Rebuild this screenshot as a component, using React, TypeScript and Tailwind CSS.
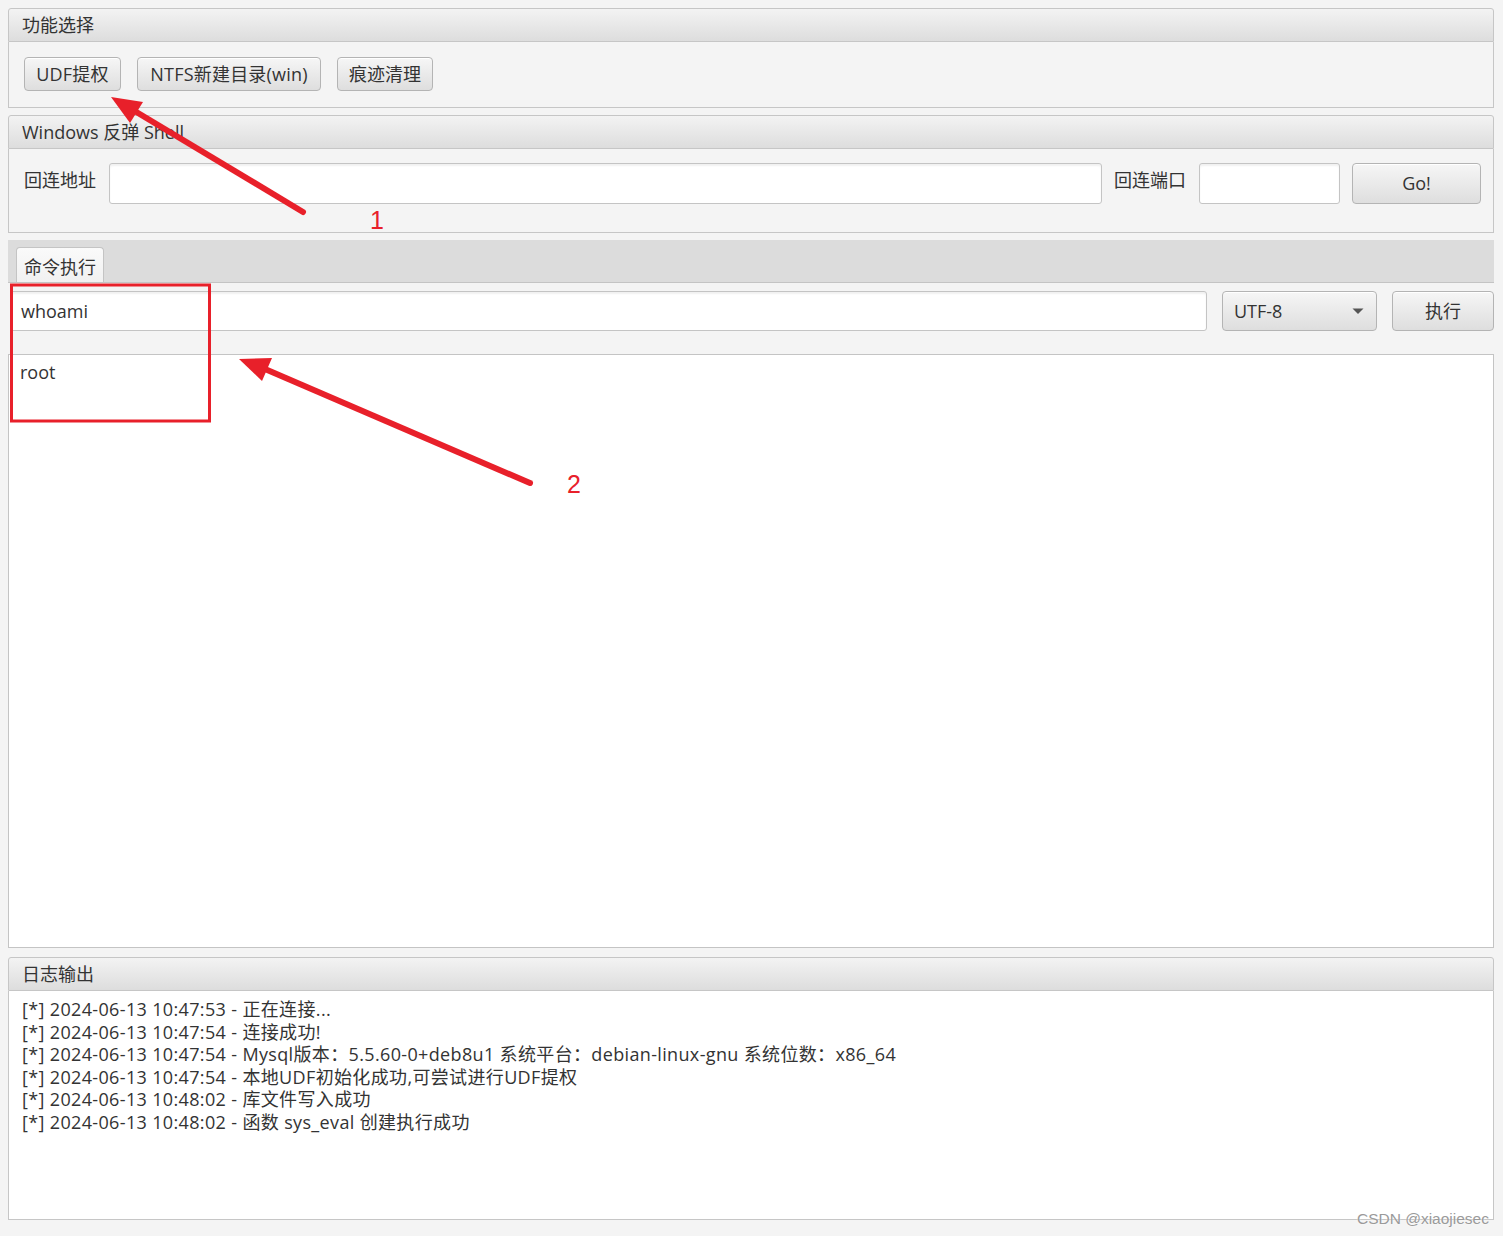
import React from "react";

const font = { fontFamily: "'Open Sans', 'Noto Sans CJK SC', sans-serif" };

function Btn({ children, className = "" }: { children: React.ReactNode; className?: string }) {
  return (
    <div
      className={
        "flex items-center justify-center rounded-[4px] border border-[#b4b4b4] bg-gradient-to-b from-[#f6f6f6] to-[#dedede] text-[18px] text-[#333] shadow-[inset_0_1px_0_#ffffff] " +
        className
      }
    >
      {children}
    </div>
  );
}

function Header({ children }: { children: React.ReactNode }) {
  return (
    <div className="flex h-[34px] items-center rounded-t-[3px] border border-[#c6c6c6] bg-gradient-to-b from-[#f3f3f3] to-[#dddddd] pl-[13px] text-[18px] text-[#333]">
      {children}
    </div>
  );
}

function Input({ className = "", children }: { className?: string; children?: React.ReactNode }) {
  return (
    <div
      className={
        "flex items-center rounded-[3px] border border-[#c4c4c4] bg-white shadow-[inset_0_2px_2px_rgba(0,0,0,0.06)] text-[18px] text-[#333] " +
        className
      }
    >
      {children}
    </div>
  );
}

export default function App() {
  return (
    <div className="relative h-[1236px] w-[1503px] overflow-hidden bg-[#f4f4f4]" style={font}>
      <div className="flex h-full flex-col pl-[8px] pr-[9px] pt-[8px]">
        {/* 功能选择 */}
        <div className="flex h-[100px] flex-col">
          <Header>功能选择</Header>
          <div className="flex flex-1 items-start gap-[16px] border border-t-0 border-[#c6c6c6] bg-[#f4f4f4] pl-[15px] pt-[15px]">
            <Btn className="h-[34px] w-[97px] tracking-[0.2px]">UDF提权</Btn>
            <Btn className="h-[34px] w-[184px] tracking-[0.2px]">NTFS新建目录(win)</Btn>
            <Btn className="h-[34px] w-[96px]">痕迹清理</Btn>
          </div>
        </div>

        {/* Windows 反弹 Shell */}
        <div className="mt-[7px] flex h-[118px] flex-col">
          <Header>Windows 反弹 Shell</Header>
          <div className="flex flex-1 items-start border border-t-0 border-[#c6c6c6] bg-[#f4f4f4] pl-[15px] pt-[14px]">
            <div className="mt-[4px] w-[85px] text-[18px] text-[#333]">回连地址</div>
            <Input className="h-[41px] w-[993px]" />
            <div className="ml-[12px] mt-[4px] w-[85px] text-[18px] text-[#333]">回连端口</div>
            <Input className="h-[41px] w-[141px]" />
            <Btn className="ml-[12px] h-[41px] w-[129px]">Go!</Btn>
          </div>
        </div>

        {/* Tab pane */}
        <div className="mt-[7px] flex h-[708px] flex-col">
          <div className="flex h-[43px] items-end border-b border-[#c4c4c4] bg-[#dcdcdc] pl-[8px]">
            <div className="flex h-[35px] w-[88px] items-center justify-center rounded-t-[4px] border border-b-0 border-[#c4c4c4] bg-gradient-to-b from-[#fafafa] to-[#f1f1f1] pt-[4px] text-[18px] text-[#333]">
              命令执行
            </div>
          </div>
          <div className="flex flex-1 flex-col bg-[#f4f4f4] pt-[8px]">
            <div className="flex items-center pl-[2px] pr-[0px]">
              <Input className="h-[40px] flex-1 pl-[10px] pt-[1px]">whoami</Input>
              <Btn className="ml-[15px] h-[40px] w-[155px] !justify-between px-[11px]">
                <span>UTF-8</span>
                <svg width="12" height="8" viewBox="0 0 12 8" className="mr-[1px]">
                  <path d="M0.5 1.5 L11.5 1.5 L6 7 Z" fill="#555" />
                </svg>
              </Btn>
              <Btn className="ml-[15px] h-[40px] w-[102px]">执行</Btn>
            </div>
            <div className="mt-[23px] flex-1 border border-[#c4c4c4] bg-white pl-[11px] pt-[4px] text-[18px] leading-[26px] text-[#333]">
              root
            </div>
          </div>
        </div>

        {/* 日志输出 */}
        <div className="mt-[9px] flex h-[263px] flex-col">
          <Header>日志输出</Header>
          <div className="flex-1 border border-t-0 border-[#c6c6c6] bg-white pl-[13px] pt-[7px] text-[18px] leading-[22.5px] tracking-[0.35px] text-[#333]">
            <div>[*] 2024-06-13 10:47:53 - 正在连接...</div>
            <div>[*] 2024-06-13 10:47:54 - 连接成功!</div>
            <div>[*] 2024-06-13 10:47:54 - Mysql版本：5.5.60-0+deb8u1 系统平台：debian-linux-gnu 系统位数：x86_64</div>
            <div>[*] 2024-06-13 10:47:54 - 本地UDF初始化成功,可尝试进行UDF提权</div>
            <div>[*] 2024-06-13 10:48:02 - 库文件写入成功</div>
            <div>[*] 2024-06-13 10:48:02 - 函数 sys_eval 创建执行成功</div>
          </div>
        </div>
      </div>

      {/* Watermark */}
      <div
        className="absolute bottom-[6px] right-[14px] text-[15.5px] text-[#9a9a9a]"
        style={{ fontFamily: "'Liberation Sans', Arial, sans-serif", textShadow: "0 0 2px #fff" }}
      >
        CSDN @xiaojiesec
      </div>

      {/* Annotations */}
      <svg className="pointer-events-none absolute left-0 top-0" width="1503" height="1236" viewBox="0 0 1503 1236">
        <line x1="303" y1="212" x2="128" y2="107" stroke="#e8202a" strokeWidth="6" strokeLinecap="round" />
        <polygon points="111,97 143,102 130,123" fill="#e8202a" />
        <line x1="530" y1="483" x2="258" y2="366" stroke="#e8202a" strokeWidth="6" strokeLinecap="round" />
        <polygon points="239,359 272,358 262,381" fill="#e8202a" />
        <rect x="11.5" y="285" width="198" height="136" fill="none" stroke="#e8202a" strokeWidth="3" />
        <text x="370" y="229" fill="#e8202a" fontSize="25" fontFamily="'Liberation Sans', Arial, sans-serif">1</text>
        <text x="567" y="493" fill="#e8202a" fontSize="25" fontFamily="'Liberation Sans', Arial, sans-serif">2</text>
      </svg>
    </div>
  );
}
